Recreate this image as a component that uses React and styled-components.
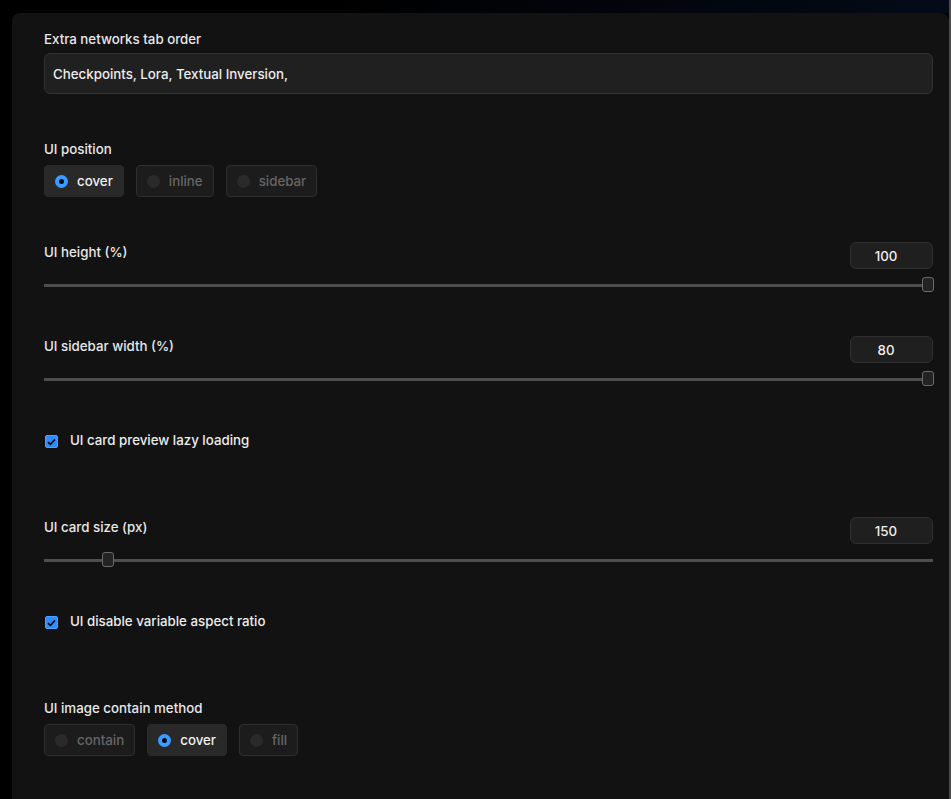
import React from "react";
import styled, { createGlobalStyle } from "styled-components";

const GlobalStyle = createGlobalStyle`
  html, body {
    margin: 0;
    padding: 0;
    background: #000;
  }
  body {
    font-family: Inter, "Noto Sans", "Liberation Sans", sans-serif;
    font-weight: 500;
    color: #e6e6e6;
  }
`;

const Page = styled.div`
  min-height: 799px;
  box-sizing: border-box;
  padding: 13px 0 0 12px;
  background: linear-gradient(to right, #000 0%, #000 35%, #040a18 100%) top / 100% 13px no-repeat, #000;
  border-right: 2px solid #4c4c4c;
  display: flex;
`;

const Panel = styled.div`
  flex: 1;
  min-height: 786px;
  box-sizing: border-box;
  background: #121212;
  border-radius: 8px 8px 0 0;
  padding: 16px 16px 0 32px;
  display: flex;
  flex-direction: column;
  gap: 43px;
`;

const Section = styled.div`
  display: flex;
  flex-direction: column;
  padding-bottom: ${(p) => p.$extra || 0}px;
`;

const Label = styled.div`
  font-size: 13.3px;
  line-height: 20px;
  color: #e8e8e8;
`;

const TextBox = styled.div`
  margin-top: 4px;
  height: 41px;
  box-sizing: border-box;
  background: #202020;
  border: 1px solid #323232;
  border-radius: 6px;
  padding: 0 8px;
  display: flex;
  align-items: center;
  font-size: 13.3px;
  color: #ededed;
`;

const RadioRow = styled.div`
  margin-top: 6px;
  display: flex;
  gap: 12px;
`;

const RadioButton = styled.div`
  height: 32px;
  box-sizing: border-box;
  padding: 0 10px;
  display: flex;
  align-items: center;
  gap: 9px;
  border-radius: 4px;
  font-size: 13.3px;
  background: ${(p) => (p.$active ? "#292929" : "#1c1c1c")};
  border: 1px solid ${(p) => (p.$active ? "#292929" : "#2e2e2e")};
  color: ${(p) => (p.$active ? "#f0f0f0" : "#666")};
`;

const Dot = styled.span`
  width: 13px;
  height: 13px;
  box-sizing: border-box;
  border-radius: 50%;
  background: ${(p) => (p.$active ? "#0a0a0a" : "#2a2a2a")};
  border: ${(p) => (p.$active ? "4px solid #3d9bff" : "none")};
`;

const SliderHead = styled.div`
  display: flex;
  justify-content: space-between;
  align-items: flex-start;
`;

const NumberBox = styled.div`
  width: 83px;
  height: 27px;
  box-sizing: border-box;
  padding-right: 11px;
  background: #1f1f1f;
  border: 1px solid #303030;
  border-radius: 6px;
  display: flex;
  align-items: center;
  justify-content: center;
  font-size: 13.3px;
  color: #f0f0f0;
`;

const Track = styled.div`
  margin-top: 8px;
  height: 16px;
  position: relative;
  &::before {
    content: "";
    position: absolute;
    left: 0;
    right: 0;
    top: 7px;
    height: 3px;
    background: #4e4e4e;
  }
`;

const Thumb = styled.div`
  position: absolute;
  top: 0;
  width: 12px;
  height: 15px;
  box-sizing: border-box;
  background: #232323;
  border: 1px solid #6a6a6a;
  border-radius: 3px;
`;

const CheckRow = styled.label`
  display: flex;
  align-items: center;
  gap: 12px;
  font-size: 13.3px;
  line-height: 20px;
  color: #ececec;
  padding-left: 1px;
`;

const CheckBox = styled.span`
  width: 13px;
  height: 13px;
  margin-top: 3px;
  box-sizing: border-box;
  border-radius: 2px;
  background: #2f8cff;
  border: 1px solid #4aa0ff;
  display: flex;
  align-items: center;
  justify-content: center;
`;

function Radios({ options, value }) {
  return (
    <RadioRow>
      {options.map((o) => (
        <RadioButton key={o} $active={o === value}>
          <Dot $active={o === value} />
          {o}
        </RadioButton>
      ))}
    </RadioRow>
  );
}

function Slider({ label, value, pos }) {
  return (
    <Section>
      <SliderHead>
        <Label>{label}</Label>
        <NumberBox>{value}</NumberBox>
      </SliderHead>
      <Track>
        <Thumb style={{ left: `calc((100% - 11px) * ${pos})` }} />
      </Track>
    </Section>
  );
}

function Check({ label }) {
  return (
    <Section $extra={24}>
      <CheckRow>
        <CheckBox>
          <svg width="9" height="8" viewBox="0 0 9 8">
            <path d="M1 4.2 L3.4 6.4 L8 1.4" fill="none" stroke="#0b0b0b" strokeWidth="1.6" />
          </svg>
        </CheckBox>
        {label}
      </CheckRow>
    </Section>
  );
}

export default function App() {
  return (
    <>
      <GlobalStyle />
      <Page>
        <Panel>
          <Section $extra={2}>
            <Label>Extra networks tab order</Label>
            <TextBox>Checkpoints, Lora, Textual Inversion,</TextBox>
          </Section>
          <Section $extra={2}>
            <Label>UI position</Label>
            <Radios options={["cover", "inline", "sidebar"]} value="cover" />
          </Section>
          <Slider label="UI height (%)" value="100" pos={1} />
          <Slider label="UI sidebar width (%)" value="80" pos={1} />
          <Check label="UI card preview lazy loading" />
          <Slider label="UI card size (px)" value="150" pos={0.066} />
          <Check label="UI disable variable aspect ratio" />
          <Section>
            <Label>UI image contain method</Label>
            <Radios options={["contain", "cover", "fill"]} value="cover" />
          </Section>
        </Panel>
      </Page>
    </>
  );
}
